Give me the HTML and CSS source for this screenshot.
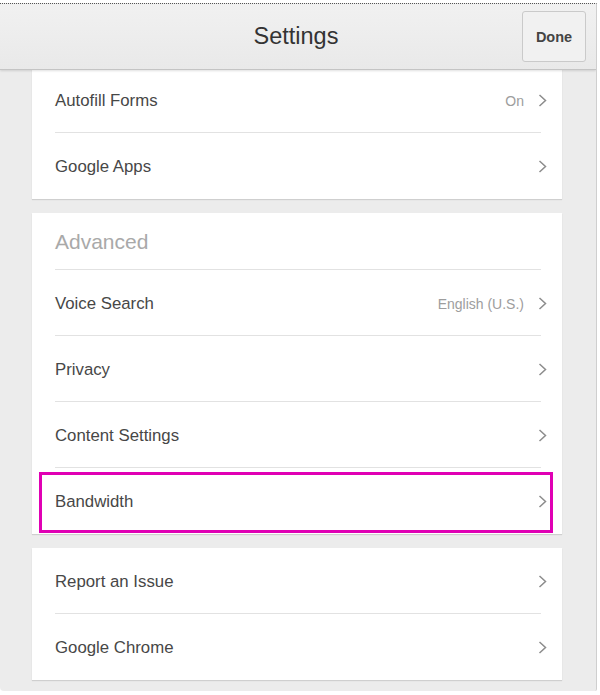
FILE: index.html
```html
<!DOCTYPE html>
<html>
<head>
<meta charset="utf-8">
<link rel="stylesheet" href="styles.css">
</head>
<body>
<div class="frame">
  <header class="topbar">
    <div class="title">Settings</div>
    <button class="done">Done</button>
  </header>
  <main class="content">
    <section class="card first">
      <div class="row"><span class="label">Autofill Forms</span><span class="value">On</span><svg class="chev" viewBox="0 0 9 13"><polyline points="1.5,1 7.5,6.5 1.5,12"/></svg></div>
      <div class="row"><span class="label">Google Apps</span><svg class="chev" viewBox="0 0 9 13"><polyline points="1.5,1 7.5,6.5 1.5,12"/></svg></div>
    </section>
    <section class="card">
      <div class="heading">Advanced</div>
      <div class="row"><span class="label">Voice Search</span><span class="value">English (U.S.)</span><svg class="chev" viewBox="0 0 9 13"><polyline points="1.5,1 7.5,6.5 1.5,12"/></svg></div>
      <div class="row"><span class="label">Privacy</span><svg class="chev" viewBox="0 0 9 13"><polyline points="1.5,1 7.5,6.5 1.5,12"/></svg></div>
      <div class="row"><span class="label">Content Settings</span><svg class="chev" viewBox="0 0 9 13"><polyline points="1.5,1 7.5,6.5 1.5,12"/></svg></div>
      <div class="row highlighted"><span class="label">Bandwidth</span><svg class="chev" viewBox="0 0 9 13"><polyline points="1.5,1 7.5,6.5 1.5,12"/></svg><span class="mark"></span></div>
    </section>
    <section class="card last">
      <div class="row"><span class="label">Report an Issue</span><svg class="chev" viewBox="0 0 9 13"><polyline points="1.5,1 7.5,6.5 1.5,12"/></svg></div>
      <div class="row"><span class="label">Google Chrome</span><svg class="chev" viewBox="0 0 9 13"><polyline points="1.5,1 7.5,6.5 1.5,12"/></svg></div>
    </section>
  </main>
</div>
</body>
</html>
```

FILE: styles.css
```css
* { box-sizing: border-box; }
html, body { margin: 0; padding: 0; background: #ffffff; }
body {
  font-family: "Liberation Sans", Arial, sans-serif;
  width: 600px;
  height: 695px;
  overflow: hidden;
}
.frame {
  margin-top: 3px;
  width: 597px;
  height: 688px;
  background: #ececec;
  border-top: 1px dotted #555;
  border-right: 1px solid #cfcfcf;
  border-bottom-left-radius: 4px;
  border-bottom-right-radius: 2px;
  overflow: hidden;
}
.topbar {
  position: relative;
  z-index: 2;
  height: 66px;
  background: linear-gradient(#f1f1f1, #e9e9e9);
  border-bottom: 1px solid #c4c4c4;
  box-shadow: 0 1px 2px rgba(0,0,0,0.12);
  display: flex;
  align-items: center;
  justify-content: center;
}
.title {
  font-size: 23.5px;
  color: #333;
  margin-left: -4px;
}
.done {
  position: absolute;
  right: 10px;
  top: 7px;
  width: 64px;
  height: 51px;
  background: #f1f1f1;
  border: 1px solid #cacaca;
  border-radius: 3px;
  font-family: "Liberation Sans", Arial, sans-serif;
  font-weight: bold;
  font-size: 14.5px;
  color: #444;
  padding: 0;
}
.content {
  margin-top: -3px;
  padding: 0 34px 0 32px;
  display: flex;
  flex-direction: column;
  gap: 14px;
}
.card {
  background: #fff;
  width: 530px;
  box-shadow: 0 1px 1px rgba(0,0,0,0.12);
}
.heading {
  height: 57px;
  margin: 0 21px 0 23px;
  border-bottom: 1px solid #e2e2e2;
  display: flex;
  align-items: center;
  font-size: 21px;
  color: #a9a9a9;
  padding-top: 2px;
}
.row {
  position: relative;
  height: 66px;
  margin: 0 15px 0 23px;
  padding-top: 1px;
  display: flex;
  align-items: center;
  background-image: linear-gradient(#e2e2e2, #e2e2e2);
  background-size: calc(100% - 6px) 1px;
  background-repeat: no-repeat;
  background-position: 0 100%;
}
.row:last-child { background-image: none; }
.label {
  flex: 1;
  font-size: 16.8px;
  color: #474747;
}
.value {
  font-size: 14px;
  color: #9d9d9d;
  margin-right: 14px;
}
.chev {
  width: 9px;
  height: 13px;
  fill: none;
  stroke: #8c8c8c;
  stroke-width: 1.5;
}
.mark {
  position: absolute;
  left: -16px;
  right: -6px;
  top: 4px;
  bottom: 1px;
  border: 3px solid #e000b4;
  pointer-events: none;
}
```
